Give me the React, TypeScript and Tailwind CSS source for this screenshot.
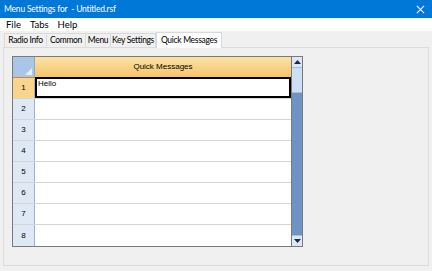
import React from "react";

const tabs = [
  { label: "Radio Info", w: "w-[43px]" },
  { label: "Common", w: "w-[40px]" },
  { label: "Menu", w: "w-[26px]" },
  { label: "Key Settings", w: "w-[46px]" },
];
const rows = [1, 2, 3, 4, 5, 6, 7, 8];

const App = () => {
  return (
    <div className="w-[432px] h-[271px] bg-[#f0f0f0] flex flex-col overflow-hidden font-['Lato',sans-serif] text-black">
      {/* title bar */}
      <div className="h-[18px] bg-[#0078d7] flex items-center justify-between pl-[4px] pr-[7px] text-white text-[8.5px] tracking-[-0.2px]">
        <span>Menu Settings for&nbsp; - Untitled.rsf</span>
        <svg width="9" height="9" viewBox="0 0 10 10">
          <path d="M1 1 L9 9 M9 1 L1 9" stroke="white" strokeWidth="1.2" />
        </svg>
      </div>
      {/* menu */}
      <div className="h-[13px] bg-white flex items-center gap-[9px] px-[6px] text-[9.5px] leading-none">
        <span>File</span>
        <span>Tabs</span>
        <span>Help</span>
      </div>
      {/* tabs */}
      <div className="flex items-end pl-[4px] h-[15px] mt-[1px]">
        {tabs.map((t) => (
          <div
            key={t.label}
            className={`${t.w} h-[14px] border border-b-0 border-[#d9d9d9] -mr-px text-[8.5px] leading-[13px] tracking-[-0.35px] text-center whitespace-nowrap bg-[#f0f0f0]`}
          >
            {t.label}
          </div>
        ))}
        <div className="w-[66px] h-[16px] ml-px border border-b-0 border-[#d9d9d9] bg-white text-[8.5px] leading-[14px] tracking-[-0.3px] text-center whitespace-nowrap -mb-px relative">
          Quick Messages
        </div>
      </div>
      {/* panel */}
      <div className="flex-1 mx-[3px] mb-[5px] border border-[#dcdcdc] bg-[#f0f0f0] pt-[8px] pl-[8px]">
        <div className="flex w-[291px] h-[191px] border border-[#7a7a7a] bg-white font-['Liberation_Sans',sans-serif] text-[8px]">
          <div className="flex-1 flex flex-col">
            <div className="flex h-[21px] border-b border-[#c88b3a]">
              <div className="w-[22px] bg-[#a9c5e8] border-r border-[#8fa9cc] relative">
                <svg className="absolute right-[2px] bottom-[2px]" width="7" height="7" viewBox="0 0 7 7">
                  <path d="M7 0 L7 7 L0 7 Z" fill="#e4eef9" />
                </svg>
              </div>
              <div className="flex-1 bg-gradient-to-b from-[#fce2a6] to-[#f5c46a] flex items-center justify-center">
                Quick Messages
              </div>
            </div>
            {rows.map((r) => (
              <div key={r} className="flex h-[21px] border-b border-[#d5d5d5] last:border-b-0">
                <div
                  className={`w-[22px] border-r border-[#9db2cf] flex items-center justify-center ${
                    r === 1 ? "bg-[#f8d48e]" : "bg-[#dfe9f5]"
                  }`}
                >
                  {r}
                </div>
                {r === 1 ? (
                  <div className="flex-1 border-2 border-black -mt-px px-[1px] leading-[10px]">Hello</div>
                ) : (
                  <div className="flex-1 bg-white" />
                )}
              </div>
            ))}
          </div>
          {/* scrollbar */}
          <div className="w-[11px] flex flex-col bg-[#6f93c5] border-l border-[#7a7a7a]">
            <div className="h-[11px] bg-[#dbe7f6] flex items-center justify-center border-b border-[#a8bcd8]">
              <svg width="7" height="4" viewBox="0 0 7 4">
                <path d="M0 4 L3.5 0 L7 4 Z" fill="#1b2a44" />
              </svg>
            </div>
            <div className="h-[25px] bg-[#cddff3] border-b border-[#a8bcd8]" />
            <div className="flex-1" />
            <div className="h-[11px] bg-[#dbe7f6] flex items-center justify-center border-t border-[#a8bcd8]">
              <svg width="7" height="4" viewBox="0 0 7 4">
                <path d="M0 0 L7 0 L3.5 4 Z" fill="#1b2a44" />
              </svg>
            </div>
          </div>
        </div>
      </div>
    </div>
  );
};

export default App;
